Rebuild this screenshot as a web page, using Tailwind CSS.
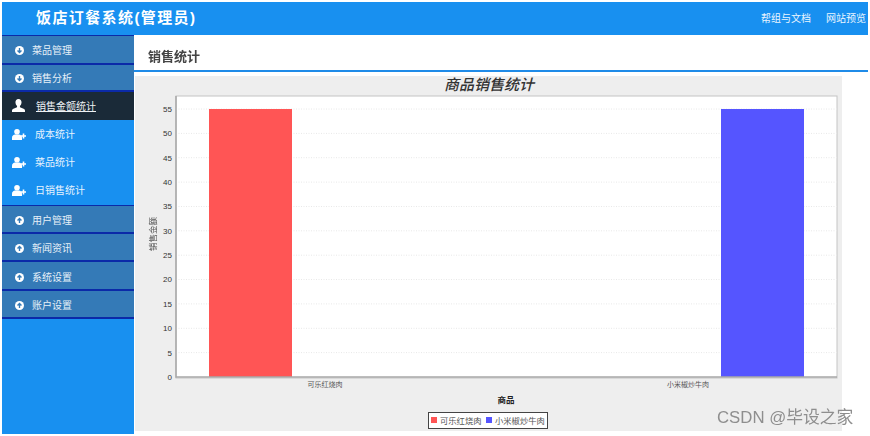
<!DOCTYPE html>
<html lang="zh">
<head>
<meta charset="utf-8">
<script src="https://cdn.jsdelivr.net/npm/@tailwindcss/browser@4"></script>
</head>
<body class="bg-white overflow-hidden">
<div class="w-[870px] h-[436px] flex flex-col pt-[2px] pl-[2px] pr-[2px] pb-[2px] blur-[0.35px] font-['Liberation_Sans','Noto_Sans_CJK_SC',sans-serif]">
  <header class="h-[33px] shrink-0 bg-[#1890f0] flex items-center text-white">
    <div class="ml-[34px] text-[15px] font-bold tracking-[1.4px] flex-1">饭店订餐系统(管理员)</div>
    <nav class="flex gap-[15px] text-[10px] mr-[2px] text-[#eaf5ff]">
      <span>帮组与文档</span>
      <span>网站预览</span>
    </nav>
  </header>
  <div class="flex flex-1 min-h-0">
    <aside class="w-[132px] shrink-0 bg-[#1890f0] text-[10px] text-white">
      <div class="h-[30px] pt-[2px] bg-[#347ab7] border-t border-b-2 border-[#0b2aa8] flex items-center pl-[13px] gap-[8px]">
        <svg class="w-[9px] h-[9px]" viewBox="0 0 10 10"><circle cx="5" cy="5" r="5" fill="#fff"/><path d="M5 2.2v5M2.8 5l2.2 2.3L7.2 5" stroke="#347ab7" stroke-width="1.5" fill="none"/></svg>
        <span class="text-[#e6f0f8]">菜品管理</span>
      </div>
      <div class="h-[27px] bg-[#347ab7] border-b-2 border-[#0b2aa8] pt-[1px] flex items-center pl-[13px] gap-[8px]">
        <svg class="w-[9px] h-[9px]" viewBox="0 0 10 10"><circle cx="5" cy="5" r="5" fill="#fff"/><path d="M5 2.2v5M2.8 5l2.2 2.3L7.2 5" stroke="#347ab7" stroke-width="1.5" fill="none"/></svg>
        <span class="text-[#e6f0f8]">销售分析</span>
      </div>
      <div class="h-[28px] pt-[1px] bg-[#1a2a38] flex items-center pl-[10px] gap-[11px]">
        <svg class="w-[13px] h-[13px] -mt-[2px]" viewBox="0 0 12 12"><path d="M6 0C4.2 0 3.2 1.3 3.2 3.1 3.2 4.5 3.8 5.8 4.7 6.5L4.6 7.6 0.8 9.2C0.3 9.5 0 10 0 10.6V12H12V10.6C12 10 11.700 9.500 11.200 9.200L7.400 7.600 7.300 6.500C8.200 5.800 8.800 4.500 8.800 3.100 8.800 1.300 7.800 0 6 0Z" fill="#fff"/></svg>
        <span class="underline text-[#eef2f5]">销售金额统计</span>
      </div>
      <div class="h-[28px] flex items-center pl-[10px] gap-[9px]">
        <svg class="w-[14px] h-[11px]" viewBox="0 0 14 11"><circle cx="5" cy="2.800" r="2.800" fill="#fff"/><path d="M0 11V8.500C0 7 1.500 5.800 3 5.600H7C8.500 5.800 10 7 10 8.500V11Z" fill="#fff"/><path d="M11.500 4.500V9.500M9 7H14" stroke="#fff" stroke-width="1.600"/></svg>
        <span class="text-[#e6f3fe]">成本统计</span>
      </div>
      <div class="h-[28px] flex items-center pl-[10px] gap-[9px]">
        <svg class="w-[14px] h-[11px]" viewBox="0 0 14 11"><circle cx="5" cy="2.800" r="2.800" fill="#fff"/><path d="M0 11V8.500C0 7 1.500 5.800 3 5.600H7C8.500 5.800 10 7 10 8.500V11Z" fill="#fff"/><path d="M11.500 4.500V9.500M9 7H14" stroke="#fff" stroke-width="1.600"/></svg>
        <span class="text-[#e6f3fe]">菜品统计</span>
      </div>
      <div class="h-[29px] pb-[1px] flex items-center pl-[10px] gap-[9px]">
        <svg class="w-[14px] h-[11px]" viewBox="0 0 14 11"><circle cx="5" cy="2.800" r="2.800" fill="#fff"/><path d="M0 11V8.500C0 7 1.500 5.800 3 5.600H7C8.500 5.800 10 7 10 8.500V11Z" fill="#fff"/><path d="M11.500 4.500V9.500M9 7H14" stroke="#fff" stroke-width="1.600"/></svg>
        <span class="text-[#e6f3fe]">日销售统计</span>
      </div>
      <div class="h-[29px] pt-[2px] bg-[#347ab7] border-t border-b-2 border-[#0b2aa8] flex items-center pl-[13px] gap-[8px]">
        <svg class="w-[9px] h-[9px]" viewBox="0 0 10 10"><circle cx="5" cy="5" r="5" fill="#fff"/><path d="M5 7.800v-5M2.800 5l2.200-2.300L7.200 5" stroke="#347ab7" stroke-width="1.500" fill="none"/></svg>
        <span class="text-[#e6f0f8]">用户管理</span>
      </div>
      <div class="h-[28px] pt-[3px] bg-[#347ab7] border-b-2 border-[#0b2aa8] flex items-center pl-[13px] gap-[8px]">
        <svg class="w-[9px] h-[9px]" viewBox="0 0 10 10"><circle cx="5" cy="5" r="5" fill="#fff"/><path d="M5 7.800v-5M2.800 5l2.200-2.300L7.200 5" stroke="#347ab7" stroke-width="1.500" fill="none"/></svg>
        <span class="text-[#e6f0f8]">新闻资讯</span>
      </div>
      <div class="h-[29px] pt-[4px] bg-[#347ab7] border-b-2 border-[#0b2aa8] flex items-center pl-[13px] gap-[8px]">
        <svg class="w-[9px] h-[9px]" viewBox="0 0 10 10"><circle cx="5" cy="5" r="5" fill="#fff"/><path d="M5 7.800v-5M2.800 5l2.200-2.300L7.200 5" stroke="#347ab7" stroke-width="1.500" fill="none"/></svg>
        <span class="text-[#e6f0f8]">系统设置</span>
      </div>
      <div class="h-[28px] pt-[3px] bg-[#347ab7] border-b-2 border-[#0b2aa8] flex items-center pl-[13px] gap-[8px]">
        <svg class="w-[9px] h-[9px]" viewBox="0 0 10 10"><circle cx="5" cy="5" r="5" fill="#fff"/><path d="M5 7.800v-5M2.800 5l2.200-2.300L7.200 5" stroke="#347ab7" stroke-width="1.500" fill="none"/></svg>
        <span class="text-[#e6f0f8]">账户设置</span>
      </div>
    </aside>
    <main class="flex-1 min-w-0 relative">
      <div class="h-[37px] border-b-2 border-[#1f8be8] flex items-center pl-[14px] pt-[8px] text-[13px] font-bold text-[#444]">销售统计</div>
      <svg class="block ml-[1px] mt-[4px]" width="707" height="355" viewBox="0 0 707 355" font-family="Liberation Sans, Noto Sans CJK SC, sans-serif">
        <rect width="707" height="355" fill="#eeeeee"/>
        <text x="354" y="14" text-anchor="middle" font-size="15" font-weight="500" font-style="italic" fill="#333">商品销售统计</text>
        <rect x="41" y="20" width="661" height="282" fill="#fff" stroke="#c4c4c4"/>
        <g stroke="#e8e8e8" stroke-dasharray="1 1.500">
          <path d="M41 33H702M41 57.400H702M41 81.700H702M41 106.100H702M41 130.500H702M41 154.800H702M41 179.200H702M41 203.500H702M41 227.900H702M41 252.300H702M41 276.600H702"/>
        </g>
        <rect x="74" y="33" width="83" height="268" fill="#ff5555"/>
        <rect x="586" y="33" width="83" height="268" fill="#5555ff"/>
        <path d="M41 20V301H702" fill="none" stroke="#a8a8a8" stroke-width="1.500"/>
        <g font-size="8" fill="#333" text-anchor="end">
          <text x="37" y="36">55</text><text x="37" y="60">50</text><text x="37" y="85">45</text><text x="37" y="109">40</text><text x="37" y="133">35</text><text x="37" y="158">30</text><text x="37" y="182">25</text><text x="37" y="206">20</text><text x="37" y="231">15</text><text x="37" y="255">10</text><text x="37" y="280">5</text><text x="37" y="304">0</text>
        </g>
        <text transform="translate(21 158) rotate(-90)" text-anchor="middle" font-size="8.500" fill="#555">销售金额</text>
        <g font-size="7" fill="#555" text-anchor="middle">
          <text x="190" y="311">可乐红烧肉</text>
          <text x="553" y="311">小米椒炒牛肉</text>
        </g>
        <text x="371" y="327" text-anchor="middle" font-size="8.500" font-weight="700" fill="#222">商品</text>
        <rect x="293.500" y="336.500" width="119" height="16" fill="#fff" stroke="#444"/>
        <rect x="296" y="341" width="6" height="6" fill="#ff5555"/>
        <text x="305" y="348" font-size="8.300" fill="#555">可乐红烧肉</text>
        <rect x="351" y="341" width="6" height="6" fill="#5555ff"/>
        <text x="360" y="348" font-size="8.300" fill="#555">小米椒炒牛肉</text>
      </svg>
      <span class="absolute left-[583px] top-[373px] text-[16.8px] text-[#8e8e8e] leading-[20px] whitespace-nowrap">CSDN @毕设之家</span>
    </main>
  </div>
</div>
</body>
</html>
